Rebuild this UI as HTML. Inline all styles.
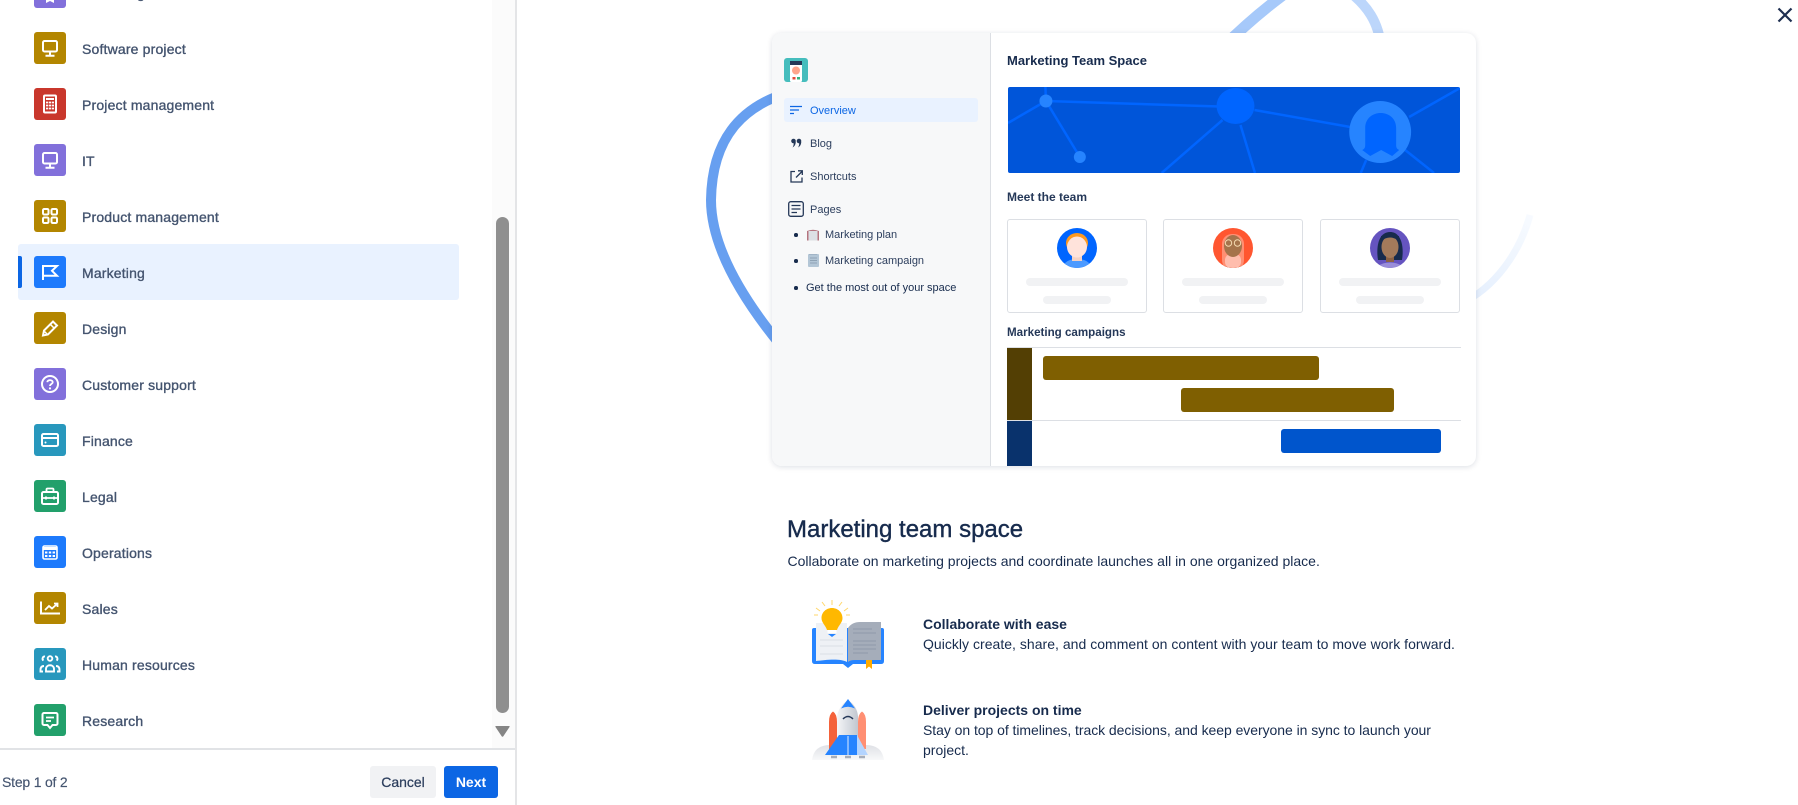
<!DOCTYPE html>
<html lang="en"><head><meta charset="utf-8"><title>Marketing team space</title>
<style>
*{box-sizing:border-box}
html,body{margin:0;padding:0;width:1798px;height:805px;overflow:hidden;background:#fff;font-family:"Liberation Sans",Arial,sans-serif}
.a,.ic,.lb,.t{position:absolute}
.ic{left:34px;width:32px;height:32px;border-radius:3px}
.ic svg{display:block;width:32px;height:32px;fill:none;stroke:#fff;stroke-width:2}
.lb{left:82px;font-size:14px;line-height:20px;color:#44546F;white-space:nowrap;-webkit-text-stroke:.35px #44546F;letter-spacing:.17px}
.t{white-space:nowrap}
.m{font-size:11px;line-height:14px;color:#2C3E5D}
.sk{position:absolute;height:8px;background:#F1F2F4;border-radius:4px}
.cd{position:absolute;top:219px;height:94px;background:#fff;border:1px solid #DCDFE4;border-radius:3px}
.b{position:absolute;border-radius:3px}
</style></head><body>

<svg class="a" style="left:0;top:0" width="1798" height="805" viewBox="0 0 1798 805" fill="none">
<defs><linearGradient id="fd" x1="1460" y1="300" x2="1535" y2="215" gradientUnits="userSpaceOnUse"><stop offset="0" stop-color="#E3EEFD"/><stop offset="1" stop-color="#F8FBFF"/></linearGradient></defs>
<path d="M790 92C745 105 712 135 711 200C711 245 740 295 778 342" stroke="#679FF0" stroke-width="10"/>
<path d="M1222 48C1245 25 1265 8 1290 -10" stroke="#A6C9FA" stroke-width="11"/>
<path d="M1347 -10C1367 5 1379 22 1381 48" stroke="#BCD6FB" stroke-width="10"/>
<path d="M1460 304C1495 288 1520 252 1530 215" stroke="url(#fd)" stroke-width="7"/>
</svg>

<!-- LEFT PANEL -->
<div class="a" style="left:492px;top:0;width:23px;height:749px;background:#FBFBFB"></div>
<div class="a" style="left:515px;top:0;width:2px;height:805px;background:#E4E5E7"></div>
<div class="a" style="left:18px;top:244px;width:441px;height:56px;background:#E9F2FF;border-radius:3px"></div>
<div class="a" style="left:18px;top:256px;width:4px;height:32px;background:#0C66E4;border-radius:0 2px 2px 0"></div>

<div class="ic" style="top:-24px;background:#8270DB"><svg viewBox="0 0 32 32"><path d="M12 20h8v7l-4-2-4 2z" fill="#fff" stroke="none"/></svg></div>
<div class="lb" style="top:-17px">Knowledge base</div>

<div class="ic" style="top:32px;background:#B38600"><svg viewBox="0 0 32 32"><rect x="9" y="9" width="14" height="10.500" rx="1.500"/><path d="M16 20v3.500M11.500 23.700h9"/></svg></div>
<div class="lb" style="top:39px">Software project</div>

<div class="ic" style="top:88px;background:#C9372C"><svg viewBox="0 0 32 32"><rect x="10" y="7.500" width="12" height="17" rx="1"/><path d="M12 11h8" stroke-width="2"/><path d="M12 14.500h8M12 17.500h8M12 20.500h8" stroke-width="1.800" stroke-dasharray="2.200 .7"/></svg></div>
<div class="lb" style="top:95px">Project management</div>

<div class="ic" style="top:144px;background:#8270DB"><svg viewBox="0 0 32 32"><rect x="9" y="9" width="14" height="10.500" rx="1.500"/><path d="M16 20v3.500M11.500 23.700h9"/></svg></div>
<div class="lb" style="top:151px">IT</div>

<div class="ic" style="top:200px;background:#B38600"><svg viewBox="0 0 32 32"><rect x="9" y="9" width="5.500" height="5.500" rx="1.200"/><rect x="17.500" y="9" width="5.500" height="5.500" rx="1.200"/><rect x="9" y="17.500" width="5.500" height="5.500" rx="1.200"/><rect x="17.500" y="17.500" width="5.500" height="5.500" rx="1.200"/></svg></div>
<div class="lb" style="top:207px">Product management</div>

<div class="ic" style="top:256px;background:#1D7AFC"><svg viewBox="0 0 32 32"><path d="M9 24V10H23L18 14.800L23 19.800H9"/></svg></div>
<div class="lb" style="top:263px">Marketing</div>

<div class="ic" style="top:312px;background:#B38600"><svg viewBox="0 0 32 32"><path d="M9 23.500L10 18.500L19 9.500L23 13.500L14 22.500Z"/><path d="M16.500 12.500L20 16M10.500 19.500L13 22" stroke-width="1.500"/></svg></div>
<div class="lb" style="top:319px">Design</div>

<div class="ic" style="top:368px;background:#8270DB"><svg viewBox="0 0 32 32"><circle cx="16" cy="16" r="8"/><path d="M13.300 14.200C13.500 11.400 18.700 11.400 18.700 14.300C18.700 16.100 16 16 16 18" stroke-width="1.800"/><circle cx="16" cy="20.400" r="1.100" fill="#fff" stroke="none"/></svg></div>
<div class="lb" style="top:375px">Customer support</div>

<div class="ic" style="top:424px;background:#2898BD"><svg viewBox="0 0 32 32"><rect x="8" y="10" width="16" height="12" rx="1.500"/><path d="M8 14h16"/><circle cx="11.500" cy="18.500" r="1" fill="#fff" stroke="none"/></svg></div>
<div class="lb" style="top:431px">Finance</div>

<div class="ic" style="top:480px;background:#22A06B"><svg viewBox="0 0 32 32"><rect x="8" y="12" width="16" height="12" rx="1.500"/><path d="M12.500 12V9.500a1 1 0 0 1 1-1h5a1 1 0 0 1 1 1V12M8 18h16M12 16.500v3M20 16.500v3" stroke-width="1.800"/></svg></div>
<div class="lb" style="top:487px">Legal</div>

<div class="ic" style="top:536px;background:#1D7AFC"><svg viewBox="0 0 32 32"><rect x="9" y="10" width="14" height="13" rx="1.500" stroke-width="1.600"/><path d="M9 12.500h14" stroke-width="3"/><path d="M11 16.500h10M11 20h10" stroke-width="2" stroke-dasharray="2.400 1.400"/></svg></div>
<div class="lb" style="top:543px">Operations</div>

<div class="ic" style="top:592px;background:#B38600"><svg viewBox="0 0 32 32"><path d="M7 9.500V21.500H26"/><path d="M11 18L15 14L18 16.500L23 12M20 11.500h3.500V15" stroke-width="1.800"/></svg></div>
<div class="lb" style="top:599px">Sales</div>

<div class="ic" style="top:648px;background:#2898BD"><svg viewBox="0 0 32 32" style="stroke-width:1.900"><circle cx="16" cy="10.500" r="2.300"/><path d="M11 8.500a2.200 2.200 0 0 0-1.500 4M21 8.500a2.200 2.200 0 0 1 1.500 4"/><path d="M12 23.500v-2.500c0-5 8-5 8 0v2.500zM9 23.500H6.500v-1.500c0-2.800 1.500-4 3.500-4M23 23.500h2.500v-1.500c0-2.800-1.500-4-3.500-4"/></svg></div>
<div class="lb" style="top:655px">Human resources</div>

<div class="ic" style="top:704px;background:#22A06B"><svg viewBox="0 0 32 32"><path d="M10 9h12a1.500 1.500 0 0 1 1.500 1.500v9a1.500 1.500 0 0 1-1.500 1.500h-3.500L16 24l-2.500-3H10a1.500 1.500 0 0 1-1.500-1.500v-9A1.500 1.500 0 0 1 10 9Z"/><path d="M12 13.500h8M12 17h5" stroke-width="1.700"/></svg></div>
<div class="lb" style="top:711px">Research</div>

<div class="a" style="left:496px;top:217px;width:13px;height:496px;background:#8F8F8F;border-radius:6.500px"></div>
<svg class="a" style="left:495px;top:726px" width="15" height="11" viewBox="0 0 15 11"><path d="M1 0H14Q15 0 14.500 1L8.500 10Q7.500 11.500 6.500 10L.5 1Q0 0 1 0Z" fill="#858585"/></svg>

<div class="a" style="left:0;top:748px;width:515px;height:2px;background:#E1E3E6"></div>
<div class="t" style="left:2px;top:772px;font-size:14px;line-height:20px;color:#44546F;letter-spacing:-.2px;-webkit-text-stroke:.15px #44546F">Step 1 of 2</div>
<div class="b" style="left:370px;top:766px;width:66px;height:32px;background:#F1F2F4;color:#2C3E5D;font-size:14px;line-height:32px;text-align:center;-webkit-text-stroke:.25px #2C3E5D">Cancel</div>
<div class="b" style="left:444px;top:766px;width:54px;height:32px;background:#0C66E4;color:#fff;font-size:14px;font-weight:700;line-height:32px;text-align:center">Next</div>

<!-- CARD -->
<div class="a" style="left:772px;top:33px;width:704px;height:433px;background:#fff;border-radius:10px;box-shadow:0 1px 6px rgba(9,30,66,.14);overflow:hidden">
  <div class="a" style="left:0;top:0;width:219px;height:433px;background:#F7F8F9;border-right:1px solid #DCDFE4"></div>
</div>

<!-- mini nav -->
<svg class="a" style="left:784px;top:58px" width="24" height="24" viewBox="0 0 24 24"><rect width="24" height="24" rx="3" fill="#45BDBD"/><rect x="6" y="3" width="12" height="21" rx="1.500" fill="#fff"/><rect x="6" y="3" width="12" height="4" fill="#253858"/><circle cx="12" cy="12.500" r="4" fill="#FFA58C"/><rect x="8.500" y="19" width="3" height="2.500" fill="#E5493A"/><rect x="13" y="19" width="3" height="2.500" fill="#36B37E"/></svg>
<div class="a" style="left:784px;top:98px;width:194px;height:24px;background:#E9F2FF;border-radius:3px"></div>
<svg class="a" style="left:790px;top:104px" width="12" height="12" viewBox="0 0 12 12" stroke="#0C66E4" stroke-width="1.300"><path d="M0 2.500H12M0 6H9M0 9.500H4"/></svg>
<div class="t m" style="left:810px;top:104px;color:#0C66E4">Overview</div>
<svg class="a" style="left:791px;top:138px" width="11" height="10" viewBox="0 0 11 10" fill="#253858"><circle cx="2.500" cy="3" r="2.300"/><path d="M3 3L4.800 4Q4.500 8 1.500 9.500Q3 7 2.600 5Z"/><circle cx="8" cy="3" r="2.300"/><path d="M8.500 3L10.300 4Q10 8 7 9.500Q8.500 7 8.100 5Z"/></svg>
<div class="t m" style="left:810px;top:137px">Blog</div>
<svg class="a" style="left:790px;top:170px" width="13" height="13" viewBox="0 0 13 13" fill="none" stroke="#253858" stroke-width="1.300"><path d="M5 1.500H1V12H12V7.500M6 7.500L12 1.500M8 .8H12.300V5"/></svg>
<div class="t m" style="left:810px;top:170px">Shortcuts</div>
<svg class="a" style="left:788px;top:201px" width="16" height="16" viewBox="0 0 16 16" fill="none" stroke="#253858" stroke-width="1.300"><rect x=".7" y=".7" width="14.600" height="14.600" rx="2"/><path d="M3.500 4.500H12.500M3.500 8H12.500M3.500 11.500H9"/></svg>
<div class="t m" style="left:810px;top:203px">Pages</div>
<div class="a" style="left:794px;top:233px;width:3.500px;height:3.500px;border-radius:50%;background:#172B4D"></div>
<div class="a" style="left:794px;top:259px;width:3.500px;height:3.500px;border-radius:50%;background:#172B4D"></div>
<div class="a" style="left:794px;top:286px;width:3.500px;height:3.500px;border-radius:50%;background:#172B4D"></div>
<svg class="a" style="left:807px;top:229px" width="12" height="12" viewBox="0 0 12 12"><path d="M0 2Q6 -.5 12 2V11.500H0Z" fill="#B5747F"/><rect x="1.500" y="2" width="9" height="9.500" fill="#DCDFE4"/></svg>
<svg class="a" style="left:808px;top:254px" width="11" height="13" viewBox="0 0 11 13"><rect width="11" height="13" rx="1" fill="#B3C6D6"/><path d="M2 1V0M4 1V0M6 1V0M8 1V0M2 4H9M2 6.500H9M2 9H9" stroke="#8FA3B5"/></svg>
<div class="t m" style="left:825px;top:228px">Marketing plan</div>
<div class="t m" style="left:825px;top:254px">Marketing campaign</div>
<div class="t m" style="left:806px;top:281px;color:#172B4D">Get the most out of your space</div>

<!-- main card content -->
<div class="t" style="left:1007px;top:53px;font-size:13px;line-height:16px;font-weight:700;color:#172B4D">Marketing Team Space</div>

<svg class="a" style="left:1008px;top:87px;border-radius:2px" width="452" height="86" viewBox="1008 87 453 86" preserveAspectRatio="none" fill="none" stroke="#0065FF" stroke-width="2.500">
<rect x="1008" y="87" width="453" height="86" fill="#0055D9" stroke="none"/>
<path d="M1046 101L1236 107M1255 110L1351 127M1223 120L1162 173M1241 125L1255.500 173M1410 117L1461 88M1367 160L1361.500 173M1406 150L1435 173M1008 123L1046 101L1080 157M1045.500 87L1046 101" />
<circle cx="1046" cy="101" r="6.500" fill="#2684FF" stroke="none"/>
<circle cx="1080" cy="157" r="6" fill="#2684FF" stroke="none"/>
<ellipse cx="1236" cy="106" rx="19" ry="18" fill="#0065FF" stroke="none"/>
<circle cx="1381" cy="132" r="31" fill="#2684FF" stroke="none"/>
<path d="M1366 145V128C1366 108 1397 108 1397 128V145C1397 148 1398 149 1400 150L1393 156L1382 150L1371 156L1363 150C1365 149 1366 148 1366 145Z" fill="#0065FF" stroke="none"/>
</svg>

<div class="t" style="left:1007px;top:190px;font-size:12px;line-height:14px;font-weight:700;color:#253858">Meet the team</div>

<div class="cd" style="left:1007px;width:140px"></div>
<div class="cd" style="left:1163px;width:140px"></div>
<div class="cd" style="left:1320px;width:140px"></div>

<svg class="a" style="left:1057px;top:228px" width="40" height="40" viewBox="0 0 40 40"><defs><clipPath id="c1"><circle cx="20" cy="20" r="20"/></clipPath></defs><g clip-path="url(#c1)"><rect width="40" height="40" fill="#0065FF"/><path d="M5 42C6 33 14 31 20 31S34 33 35 42Z" fill="#4C9AFF"/><rect x="15" y="24" width="10" height="9" fill="#F4D2C5"/><ellipse cx="20" cy="15" rx="11" ry="10" fill="#FF991F"/><ellipse cx="20" cy="19" rx="10" ry="10.500" fill="#FFE3DB"/></g></svg>
<svg class="a" style="left:1213px;top:228px" width="40" height="40" viewBox="0 0 40 40"><defs><clipPath id="c2"><circle cx="20" cy="20" r="20"/></clipPath></defs><g clip-path="url(#c2)"><rect width="40" height="40" fill="#FF5630"/><path d="M6 42C8 34 32 34 34 42Z" fill="#7A2B18"/><rect x="9" y="6" width="22" height="36" rx="10" fill="#FF8F73"/><rect x="12" y="26" width="16" height="14" rx="6" fill="#FFBDAD"/><ellipse cx="20" cy="18" rx="9" ry="11" fill="#A5734B"/><circle cx="15.500" cy="15" r="3.200" fill="none" stroke="#F4D9B0"/><circle cx="24.500" cy="15" r="3.200" fill="none" stroke="#F4D9B0"/></g></svg>
<svg class="a" style="left:1370px;top:228px" width="40" height="40" viewBox="0 0 40 40"><defs><clipPath id="c3"><circle cx="20" cy="20" r="20"/></clipPath></defs><g clip-path="url(#c3)"><rect width="40" height="40" fill="#6554C0"/><path d="M8 32C6 20 8 4 20 4S34 20 32 32Z" fill="#172B4D"/><path d="M6 42C8 32 32 32 34 42Z" fill="#998DD9"/><rect x="16" y="24" width="8" height="10" fill="#8A6145"/><ellipse cx="20" cy="19" rx="8.500" ry="11" fill="#A37A5B"/><path d="M11 13Q20 6 29 13V8H11Z" fill="#172B4D"/></g></svg>

<div class="sk" style="left:1026px;top:278px;width:102px"></div><div class="sk" style="left:1043px;top:296px;width:68px"></div>
<div class="sk" style="left:1182px;top:278px;width:102px"></div><div class="sk" style="left:1199px;top:296px;width:68px"></div>
<div class="sk" style="left:1339px;top:278px;width:102px"></div><div class="sk" style="left:1356px;top:296px;width:68px"></div>

<div class="t" style="left:1007px;top:326px;font-size:11.600px;line-height:14px;font-weight:700;color:#253858">Marketing campaigns</div>
<div class="a" style="left:1007px;top:347px;width:454px;height:1px;background:#DCDFE4"></div>
<div class="a" style="left:1007px;top:420px;width:454px;height:1px;background:#DCDFE4"></div>
<div class="a" style="left:1007px;top:348px;width:25px;height:72px;background:#533F04"></div>
<div class="a" style="left:1007px;top:421px;width:25px;height:45px;background:#09326C"></div>
<div class="b" style="left:1043px;top:356px;width:276px;height:24px;background:#7F5F01"></div>
<div class="b" style="left:1181px;top:388px;width:213px;height:24px;background:#7F5F01"></div>
<div class="b" style="left:1281px;top:429px;width:160px;height:24px;background:#0055CC"></div>

<!-- description -->
<div class="t" style="left:787px;top:515px;font-size:24px;line-height:30px;color:#172B4D;-webkit-text-stroke:.4px #172B4D">Marketing team space</div>
<div class="t" style="left:787.500px;top:551px;font-size:14px;line-height:20px;color:#172B4D">Collaborate on marketing projects and coordinate launches all in one organized place.</div>

<svg class="a" style="left:805px;top:595px;filter:blur(.35px)" width="90" height="78" viewBox="805 595 90 78" fill="none">
<path d="M814 628H882Q884 628 884 630V661Q884 664 881 664H853L848 668L843 664H815Q812 664 812 661V630Q812 628 814 628Z" fill="#2684FF"/>
<path d="M816 623H847V662C840 658 825 660 816 661Z" fill="#EEF1F5"/>
<path d="M848 662V628Q852 622 860 622H881V660H855Q850 660 848 662Z" fill="#A5ADBA"/>
<path d="M853 629H872M853 633H876M853 641H876M853 645H876M853 649H876M853 653H868" stroke="#8993A4" stroke-width=".8"/>
<path d="M820 640H843M820 646H843M820 654H843" stroke="#D5D9E0" stroke-width=".8"/>
<path d="M866 660H872V669L869 666.500L866 669Z" fill="#FFAB00"/>
<path d="M832 600V605M822 602L825 606M842 602L839 606M816 608L820 611M848 608L844 611M814 615H818M846 615H850" stroke="#FFD76B" stroke-width="1"/>
<path d="M832 608C838 608 842.500 612.500 842.500 618C842.500 623 838.500 625 837 630H827C825.500 625 821.500 623 821.500 618C821.500 612.500 826 608 832 608Z" fill="#FFB800"/>
<rect x="827.500" y="630" width="9" height="3" fill="#fff"/>
<path d="M828 634H836L832 637Z" fill="#2684FF"/>
</svg>
<div class="t" style="left:923px;top:614px;font-size:14px;line-height:20px;font-weight:700;color:#172B4D">Collaborate with ease</div>
<div class="t" style="left:923px;top:634px;font-size:14px;line-height:20px;color:#172B4D;letter-spacing:.025px">Quickly create, share, and comment on content with your team to move work forward.</div>

<svg class="a" style="left:805px;top:695px;filter:blur(.35px)" width="90" height="72" viewBox="805 695 90 72" fill="none">
<defs><linearGradient id="cl" x1="0" y1="0" x2="0" y2="1"><stop offset="0" stop-color="#DFE1E6"/><stop offset="1" stop-color="#F8F9FA"/></linearGradient><linearGradient id="bd" x1="0" y1="0" x2="1" y2="0"><stop offset="0" stop-color="#F4F5F7"/><stop offset="1" stop-color="#C1C7D0"/></linearGradient></defs>
<path d="M812 760Q814 745 830 745H866Q882 745 884 760Z" fill="url(#cl)"/>
<path d="M829 749V722Q829 714 833 711.500Q837 714 837 722V749Z" fill="#F4623A"/>
<path d="M858 749V722Q858 714 862 711.500Q866 714 866 722V749Z" fill="#FF8F73"/>
<path d="M837 738V716Q839 706 848 700Q857 706 858 716V738Z" fill="url(#bd)"/>
<path d="M848 699L855 708.500Q848 705 841 708.500Z" fill="#2684FF"/>
<path d="M843 719Q848 714 853 719" stroke="#253858" stroke-width="1.500"/>
<path d="M839 735H857V755H825Z" fill="#2684FF"/>
<path d="M857 735L868 755H857Z" fill="#B3D4FF"/>
<path d="M848 736V755" stroke="#DEEBFF"/>
<path d="M831 757h6M845 757h6M859 757h6" stroke="#A5ADBA" stroke-width="2.500"/>
</svg>
<div class="t" style="left:923px;top:700px;font-size:14px;line-height:20px;font-weight:700;color:#172B4D">Deliver projects on time</div>
<div class="t" style="left:923px;top:720px;font-size:14px;line-height:20px;color:#172B4D;letter-spacing:-.05px">Stay on top of timelines, track decisions, and keep everyone in sync to launch your</div>
<div class="t" style="left:923px;top:740px;font-size:14px;line-height:20px;color:#172B4D">project.</div>

<svg class="a" style="left:1777px;top:7px" width="16" height="16" viewBox="0 0 16 16"><path d="M1.500 1.500L14.500 14.500M14.500 1.500L1.500 14.500" stroke="#1D2E50" stroke-width="2.200" fill="none"/></svg>
</body></html>
